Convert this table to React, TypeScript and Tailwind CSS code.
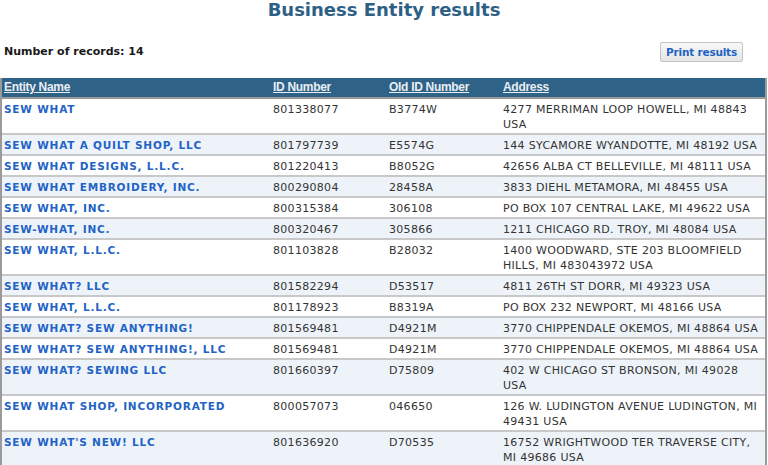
import React from "react";

const rows: [string, string, string, string][] = [
  ["SEW WHAT", "801338077", "B3774W", "4277 MERRIMAN LOOP HOWELL, MI 48843 USA"],
  ["SEW WHAT A QUILT SHOP, LLC", "801797739", "E5574G", "144 SYCAMORE WYANDOTTE, MI 48192 USA"],
  ["SEW WHAT DESIGNS, L.L.C.", "801220413", "B8052G", "42656 ALBA CT BELLEVILLE, MI 48111 USA"],
  ["SEW WHAT EMBROIDERY, INC.", "800290804", "28458A", "3833 DIEHL METAMORA, MI 48455 USA"],
  ["SEW WHAT, INC.", "800315384", "306108", "PO BOX 107 CENTRAL LAKE, MI 49622 USA"],
  ["SEW-WHAT, INC.", "800320467", "305866", "1211 CHICAGO RD. TROY, MI 48084 USA"],
  ["SEW WHAT, L.L.C.", "801103828", "B28032", "1400 WOODWARD, STE 203 BLOOMFIELD HILLS, MI 483043972 USA"],
  ["SEW WHAT? LLC", "801582294", "D53517", "4811 26TH ST DORR, MI 49323 USA"],
  ["SEW WHAT, L.L.C.", "801178923", "B8319A", "PO BOX 232 NEWPORT, MI 48166 USA"],
  ["SEW WHAT? SEW ANYTHING!", "801569481", "D4921M", "3770 CHIPPENDALE OKEMOS, MI 48864 USA"],
  ["SEW WHAT? SEW ANYTHING!, LLC", "801569481", "D4921M", "3770 CHIPPENDALE OKEMOS, MI 48864 USA"],
  ["SEW WHAT? SEWING LLC", "801660397", "D75809", "402 W CHICAGO ST BRONSON, MI 49028 USA"],
  ["SEW WHAT SHOP, INCORPORATED", "800057073", "046650", "126 W. LUDINGTON AVENUE LUDINGTON, MI 49431 USA"],
  ["SEW WHAT'S NEW! LLC", "801636920", "D70535", "16752 WRIGHTWOOD TER TRAVERSE CITY, MI 49686 USA"],
];

export default function App() {
  return (
    <div className="w-[768px] h-[465px] overflow-hidden bg-white font-['DejaVu_Sans',Verdana,sans-serif] text-[11px] text-[#333]">
      <h1 className="text-center text-[18px] leading-[20px] font-bold text-[#2e6086] mt-0">
        Business Entity results
      </h1>
      <div className="flex items-center justify-between mt-[22px] pl-[4px] pr-[25px] h-[20px]">
        <div className="font-bold text-[#1a1a1a] text-[11px]">Number of records: 14</div>
        <button className="h-[20px] px-[5px] border border-[#c4c4c4] bg-gradient-to-b from-[#f8f8f8] to-[#e4e4e4] text-[#1f63c6] font-bold text-[10.5px] tracking-[-0.2px] leading-[16px] rounded-[2px]">
          Print results
        </button>
      </div>
      <div className="mt-[16px] w-[767px] border-l-2 border-r-2 border-[#9a9a9a]">
        <table className="w-full table-fixed border-collapse">
          <colgroup>
            <col className="w-[269px]" />
            <col className="w-[116px]" />
            <col className="w-[114px]" />
            <col />
          </colgroup>
          <thead>
            <tr className="bg-[#2e6286] h-[19px] border-b-2 border-[#9a9a9a]">
              {["Entity Name", "ID Number", "Old ID Number", "Address"].map((h) => (
                <th
                  key={h}
                  className="text-left font-bold text-[12px] leading-[15px] font-['Liberation_Sans',Arial,sans-serif] text-[#e8eef4] underline pl-[2px] pr-[4px] py-[2px] tracking-[-0.3px]"
                >
                  {h}
                </th>
              ))}
            </tr>
          </thead>
          <tbody>
            {rows.map((r, i) => (
              <tr
                key={i}
                className={`${i % 2 === 1 ? "bg-[#eef3fa]" : "bg-white"} border-b-2 border-[#c8c8c8] align-top`}
              >
                <td className="pl-[2px] pr-[4px] pt-[3px] pb-[1px] leading-[15px] font-bold text-[#1f63c6] text-[10.5px] tracking-[0.8px]">{r[0]}</td>
                <td className="pl-[2px] pr-[4px] pt-[3px] pb-[1px] leading-[15px] tracking-[0.3px]">{r[1]}</td>
                <td className="pl-[2px] pr-[4px] pt-[3px] pb-[1px] leading-[15px] tracking-[0.3px]">{r[2]}</td>
                <td className="pl-[2px] pr-[4px] pt-[3px] pb-[1px] leading-[15px] tracking-[0.3px]">{r[3]}</td>
              </tr>
            ))}
          </tbody>
        </table>
      </div>
    </div>
  );
}
